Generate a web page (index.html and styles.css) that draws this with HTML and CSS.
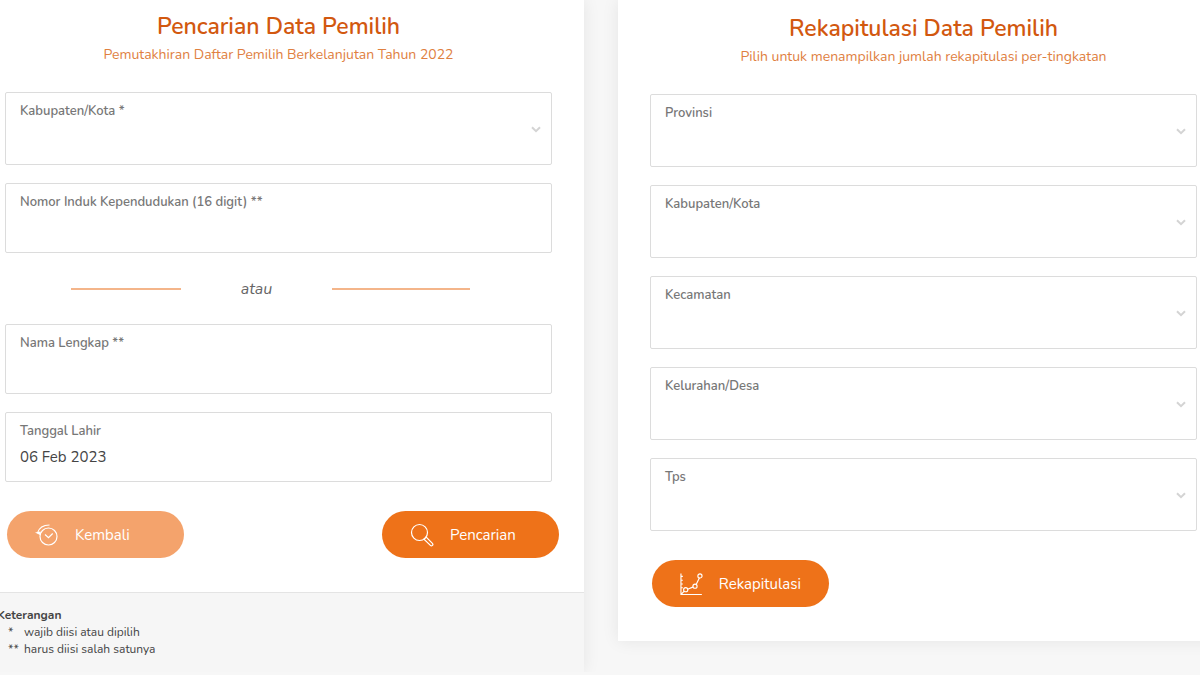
FILE: index.html
```
<!DOCTYPE html>
<html lang="id">
<head>
  <meta charset="UTF-8">
  <meta name="viewport" content="width=device-width, initial-scale=1.0">
  <title>Data Pemilih</title>
  <link rel="stylesheet" href="styles.css">
</head>
<body>

  <main class="columns">

    <!-- Pencarian -->
    <section class="card search">
      <form class="card-body">
        <h2>Pencarian Data Pemilih</h2>
        <p class="subtitle">Pemutakhiran Daftar Pemilih Berkelanjutan Tahun 2022</p>

        <div class="field field-select">
          <label for="kabupaten">Kabupaten/Kota *</label>
          <select id="kabupaten"><option value=""></option></select>
          <svg class="chevron" viewBox="0 0 10 7"><path d="M1 1.2l4 4 4-4"/></svg>
        </div>
        <div class="field">
          <label for="nik">Nomor Induk Kependudukan (16 digit) **</label>
          <input type="text" id="nik" maxlength="16">
        </div>

        <div class="divider">
          <span class="line"></span>
          <em>atau</em>
          <span class="line"></span>
        </div>

        <div class="field">
          <label for="nama">Nama Lengkap **</label>
          <input type="text" id="nama">
        </div>
        <div class="field">
          <label for="lahir">Tanggal Lahir</label>
          <input type="text" id="lahir" value="06 Feb 2023">
        </div>

        <div class="actions">
          <button type="button" class="btn btn-light">
            <svg viewBox="0 0 24 24">
              <circle cx="13.5" cy="13.5" r="8.5"/>
              <path d="M10 11.5l3.5 3.2 4.2-4.2M14.500 2C8.500 2 4 5 2.500 10"/>
              <path class="solid" d="M0 9.500l5.500-1 .5 4z"/>
            </svg>
            Kembali
          </button>
          <button type="button" class="btn">
            <svg viewBox="0 0 24 24">
              <circle cx="9.5" cy="9.5" r="8"/>
              <path d="M14 16.2l2.200-2.200 6.200 6.400a1.400 1.400 0 0 1-2 2z"/>
            </svg>
            Pencarian
          </button>
        </div>
      </form>

      <footer class="notes">
        <strong>Keterangan</strong>
        <dl>
          <dt>*</dt><dd>wajib diisi atau dipilih</dd>
          <dt>**</dt><dd>harus diisi salah satunya</dd>
        </dl>
      </footer>
    </section>

    <!-- Rekapitulasi -->
    <section class="card recap">
      <form class="card-body">
        <h2>Rekapitulasi Data Pemilih</h2>
        <p class="subtitle">Pilih untuk menampilkan jumlah rekapitulasi per-tingkatan</p>

        <div class="field field-select">
          <label for="r-provinsi">Provinsi</label>
          <select id="r-provinsi"><option value=""></option></select>
          <svg class="chevron" viewBox="0 0 10 7"><path d="M1 1.2l4 4 4-4"/></svg>
        </div>
        <div class="field field-select">
          <label for="r-kabupaten">Kabupaten/Kota</label>
          <select id="r-kabupaten"><option value=""></option></select>
          <svg class="chevron" viewBox="0 0 10 7"><path d="M1 1.2l4 4 4-4"/></svg>
        </div>
        <div class="field field-select">
          <label for="r-kecamatan">Kecamatan</label>
          <select id="r-kecamatan"><option value=""></option></select>
          <svg class="chevron" viewBox="0 0 10 7"><path d="M1 1.2l4 4 4-4"/></svg>
        </div>
        <div class="field field-select">
          <label for="r-kelurahan">Kelurahan/Desa</label>
          <select id="r-kelurahan"><option value=""></option></select>
          <svg class="chevron" viewBox="0 0 10 7"><path d="M1 1.2l4 4 4-4"/></svg>
        </div>
        <div class="field field-select">
          <label for="r-tps">Tps</label>
          <select id="r-tps"><option value=""></option></select>
          <svg class="chevron" viewBox="0 0 10 7"><path d="M1 1.2l4 4 4-4"/></svg>
        </div>

        <div class="actions">
          <button type="button" class="btn">
            <svg viewBox="0 0 24 24">
              <path d="M1 1v22h22M1 4h2M1 8h2M1 12h2M1 16h2M1.5 22.5l3-3M8 17.5l6-2.5M17 12.5L20.5 5.5"/>
              <circle cx="6" cy="18" r="2.2"/>
              <circle cx="15.8" cy="14.3" r="2.2"/>
              <circle cx="21" cy="3.5" r="2.2"/>
            </svg>
            Rekapitulasi
          </button>
        </div>
      </form>
    </section>

  </main>

</body>
</html>
```

FILE: styles.css
```
* {
  box-sizing: border-box;
}

body {
  margin: 0;
  background: #f7f7f7;
  color: #444;
  font-family: Nunito, Lato, sans-serif;
  overflow: hidden;
}

/* the two cards run past both window edges */
.columns {
  display: grid;
  grid-template-columns: 1fr 1fr;
  gap: 34px;
  align-items: start;
  margin: 0 -29px 0 -27px;
}

.card {
  background: #fff;
  box-shadow: 0 0 16px rgba(0, 0, 0, 0.08);
}

.card-body {
  padding: 11px 32px 34px;
}

.recap .card-body {
  padding-top: 13px;
}

h2 {
  margin: 0;
  color: #d2580f;
  font-size: 23px;
  font-weight: 600;
  line-height: 32px;
  text-align: center;
}

.subtitle {
  margin: 0 0 25px;
  color: #e0803f;
  font-size: 14px;
  line-height: 24px;
  text-align: center;
}

.field {
  position: relative;
  height: 70px;
  margin-bottom: 18px;
  padding: 9px 14px 0;
  border: 1px solid #dcdcdc;
  border-radius: 2px;
}

.field-select {
  height: 73px;
}

.field label {
  display: block;
  color: #777;
  font-size: 13px;
  font-weight: 600;
  line-height: 18px;
}

.field input,
.field select {
  display: block;
  width: 100%;
  height: 24px;
  margin-top: 5px;
  padding: 0;
  border: 0;
  outline: 0;
  background: transparent;
  color: #444;
  font-family: inherit;
  font-size: 15px;
  appearance: none;
}

.chevron {
  position: absolute;
  top: 33px;
  right: 10px;
  width: 10px;
  height: 7px;
  fill: none;
  stroke: #d4d4d4;
  stroke-width: 2;
  pointer-events: none;
}

.divider {
  display: grid;
  grid-template-columns: 110fr 151fr 138fr;
  align-items: center;
  margin: 24px 82px 23px 66px;
}

.divider .line {
  height: 2px;
  background: #f4b58a;
}

.divider em {
  color: #666;
  font-size: 16px;
  line-height: 24px;
  text-align: center;
}

.actions {
  display: flex;
  justify-content: space-between;
  margin: 29px -7px 0 2px;
}

.btn {
  display: flex;
  align-items: center;
  width: 177px;
  height: 47px;
  padding: 0 28px;
  gap: 16px;
  border: 0;
  border-radius: 24px;
  background: #ee7219;
  color: #fff;
  font-family: inherit;
  font-size: 15px;
  cursor: pointer;
}

.btn-light {
  background: #f4a36c;
}

.btn svg {
  width: 24px;
  height: 24px;
  fill: none;
  stroke: #fff;
  stroke-width: 1.2;
}

.btn svg .solid {
  fill: #fff;
  stroke: none;
}

.notes {
  padding: 14px 24px;
  border-top: 1px solid #e4e4e4;
  background: #f6f6f6;
  font-size: 12px;
  line-height: 17px;
}

.notes strong {
  display: block;
}

.notes dl {
  display: grid;
  grid-template-columns: 16px 1fr;
  margin: 0 0 0 11px;
}

.notes dd {
  margin: 0;
}
```
